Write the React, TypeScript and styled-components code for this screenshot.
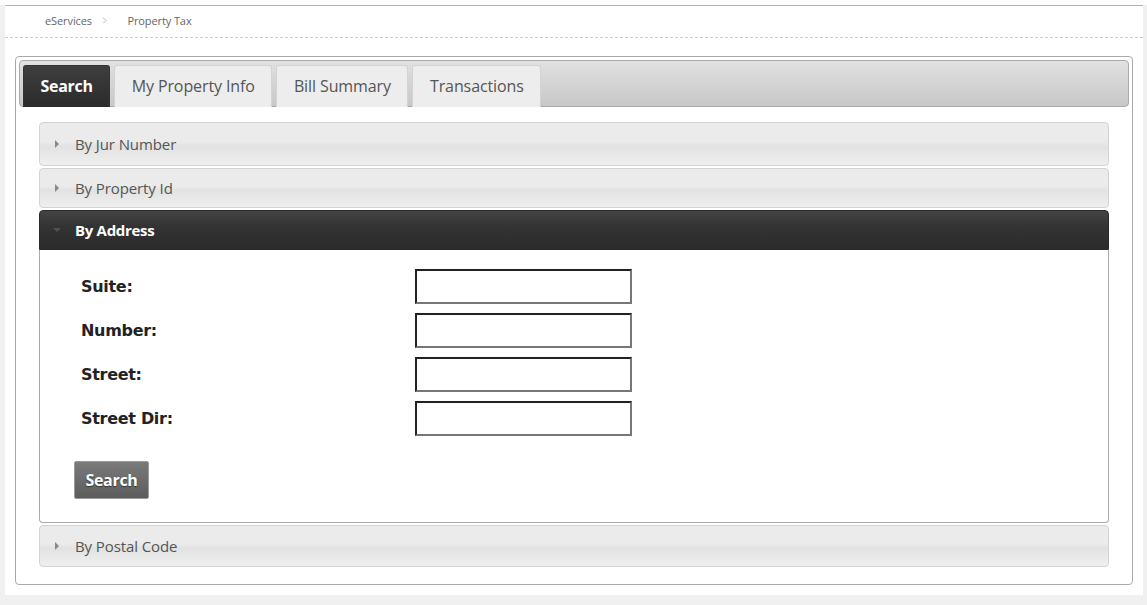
import { Fragment } from 'react'
import styled, { createGlobalStyle } from 'styled-components'

const GlobalStyle = createGlobalStyle`
  html, body {
    margin: 0;
    padding: 0;
    background: #f0f0f0;
  }
  * {
    box-sizing: border-box;
  }
`

const Page = styled.div`
  height: 605px;
  border-top: 5px solid #ffffff;
  padding: 0 4px 10px 5px;
`

const Panel = styled.div`
  height: 100%;
  background: #ffffff;
  border-top: 1px solid #9fb5ca;
  display: flex;
  flex-direction: column;
`

const Crumbs = styled.div`
  flex-shrink: 0;
  height: 32px;
  display: flex;
  align-items: center;
  padding: 0 0 3px 40px;
  border-bottom: 1px dashed #cccccc;
  font-family: 'Open Sans', sans-serif;
  font-size: 11px;
  color: #666666;
`

const Crumb = styled.span`
  letter-spacing: -0.1px;
`

const CrumbSep = styled.span`
  color: #c4c4c4;
  margin: 0 19px 0 9px;
  font-size: 13px;
  display: inline-block;
  transform: scaleX(0.6);
`

const Body = styled.div`
  flex: 1;
  min-height: 0;
  padding: 18px 10px 10px 10px;
  display: flex;
`

const TabBox = styled.div`
  flex: 1;
  border: 1px solid #aaaaaa;
  border-radius: 4px;
  padding: 3px;
  display: flex;
  flex-direction: column;
`

const TabBar = styled.div`
  flex-shrink: 0;
  height: 47px;
  border: 1px solid #aaaaaa;
  border-radius: 4px;
  background: linear-gradient(#e2e2e2, #d6d6d6 40%, #c8c8c8);
  padding: 4px 3px 0 3px;
  display: flex;
  gap: 4px;
`

const Tab = styled.div<{ $active?: boolean }>`
  height: 42px;
  margin-bottom: -1px;
  padding: 0 16.5px 1px 16.5px;
  display: flex;
  align-items: center;
  border: 1px solid ${(p) => (p.$active ? '#333333' : '#d3d3d3')};
  border-bottom: none;
  border-radius: 3px 3px 0 0;
  background: ${(p) => (p.$active ? 'linear-gradient(#3f3f3f, #2a2a2a)' : '#ededed')};
  color: ${(p) => (p.$active ? '#ffffff' : '#555555')};
  font-family: 'Open Sans', sans-serif;
  font-size: 16px;
  font-weight: ${(p) => (p.$active ? 700 : 400)};
  letter-spacing: ${(p) => (p.$active ? '-0.3px' : '-0.1px')};
`

const Accordion = styled.div`
  padding: 15px 20px 0 20px;
  display: flex;
  flex-direction: column;
  gap: 2px;
`

const Header = styled.div<{ $open?: boolean; $h?: number }>`
  flex-shrink: 0;
  height: ${(p) => p.$h ?? 42}px;
  display: flex;
  align-items: center;
  padding-left: 13px;
  border: 1px solid ${(p) => (p.$open ? '#2a2a2a' : '#d3d3d3')};
  border-radius: ${(p) => (p.$open ? '4px 4px 0 0' : '4px')};
  background: ${(p) =>
    p.$open
      ? 'linear-gradient(#444444, #333333 40%, #2b2b2b)'
      : 'linear-gradient(#ebebeb, #ebebeb 45%, #e2e2e2 55%, #efefef)'};
  color: ${(p) => (p.$open ? '#ffffff' : '#555555')};
  font-family: 'Open Sans', sans-serif;
  font-size: 15px;
  font-weight: ${(p) => (p.$open ? 700 : 400)};
  letter-spacing: ${(p) => (p.$open ? '-0.3px' : '-0.1px')};
`

const Caret = styled.span<{ $open?: boolean }>`
  width: 0;
  height: 0;
  ${(p) =>
    p.$open
      ? `border-left: 4px solid transparent;
         border-right: 4px solid transparent;
         border-top: 4px solid #505050;
         margin-right: 14px;`
      : `border-top: 4px solid transparent;
         border-bottom: 4px solid transparent;
         border-left: 4px solid #888888;
         margin-left: 2px;
         margin-right: 16px;`}
`

const Content = styled.div`
  height: 273px;
  border: 1px solid #aaaaaa;
  border-top: none;
  border-radius: 0 0 4px 4px;
  padding: 19px 34px 0 34px;
  display: flex;
  flex-direction: column;
`

const Form = styled.div`
  display: grid;
  grid-template-columns: 341px 217px;
  row-gap: 9px;
`

const Label = styled.label`
  display: flex;
  align-items: center;
  padding-left: 7px;
  padding-bottom: 1px;
  height: 35px;
  font-family: 'DejaVu Sans', Verdana, sans-serif;
  font-size: 16px;
  font-weight: 700;
  color: #222222;
  letter-spacing: -0.3px;
`

const Input = styled.input`
  width: 217px;
  height: 35px;
  margin: 0;
  border: 2px solid;
  border-color: #222222 #777777 #777777 #222222;
  background: #ffffff;
  font-size: 14px;
  outline: none;
`

const Button = styled.button`
  align-self: flex-start;
  margin-top: 25px;
  width: 75px;
  height: 38px;
  padding: 0;
  border: 1px solid #9a9a9a;
  border-radius: 2px;
  background: linear-gradient(#7a7a7a, #5c5c5c);
  color: #ffffff;
  font-family: 'Open Sans', sans-serif;
  font-size: 16px;
  font-weight: 700;
  letter-spacing: -0.3px;
  text-shadow: 0 1px 1px #333333;
  cursor: pointer;
`

const fields = ['Suite:', 'Number:', 'Street:', 'Street Dir:']

export default function App() {
  return (
    <>
      <GlobalStyle />
      <Page>
        <Panel>
          <Crumbs>
            <Crumb>eServices</Crumb>
            <CrumbSep>&gt;</CrumbSep>
            <Crumb>Property Tax</Crumb>
          </Crumbs>
          <Body>
            <TabBox>
              <TabBar>
                <Tab $active>Search</Tab>
                <Tab>My Property Info</Tab>
                <Tab>Bill Summary</Tab>
                <Tab>Transactions</Tab>
              </TabBar>
              <Accordion>
                <Header $h={44}>
                  <Caret />
                  By Jur Number
                </Header>
                <Header $h={40}>
                  <Caret />
                  By Property Id
                </Header>
                <div>
                  <Header $open $h={40}>
                    <Caret $open />
                    By Address
                  </Header>
                  <Content>
                    <Form>
                      {fields.map((f) => (
                        <Fragment key={f}>
                          <Label>{f}</Label>
                          <Input type="text" />
                        </Fragment>
                      ))}
                    </Form>
                    <Button>Search</Button>
                  </Content>
                </div>
                <Header $h={42}>
                  <Caret />
                  By Postal Code
                </Header>
              </Accordion>
            </TabBox>
          </Body>
        </Panel>
      </Page>
    </>
  )
}
